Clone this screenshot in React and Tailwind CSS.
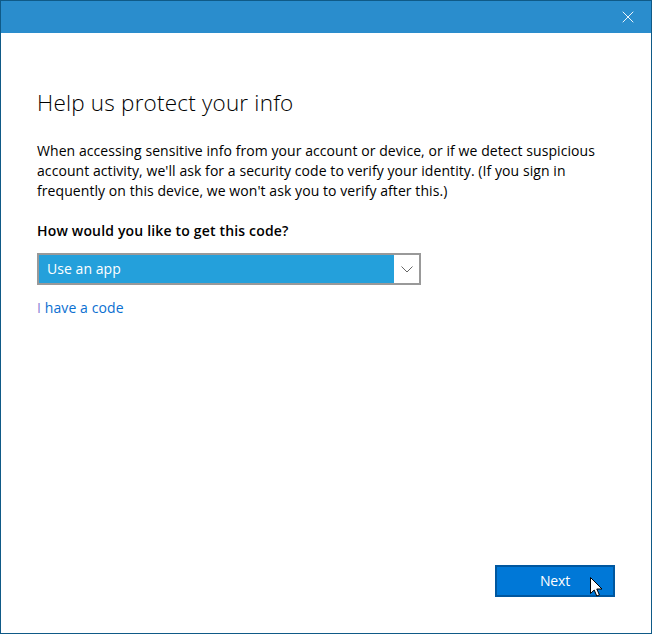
import { X } from "lucide-react";

export default function App() {
  return (
    <div className="flex h-[634px] w-[652px] flex-col border border-[#0f5a87] bg-white font-['Open_Sans','Noto_Sans',sans-serif] text-black">
      {/* Title bar */}
      <div className="flex h-[32px] shrink-0 items-center justify-end bg-[#2a8dcd] pr-[13px]">
        <X className="h-[20px] w-[20px] text-white" strokeWidth={1.1} />
      </div>

      <div className="flex flex-1 flex-col pl-[36px] pr-[36px]">
        <h1 className="mt-[52px] text-[22.5px] font-light leading-[36px] tracking-[0.2px]">Help us protect your info</h1>

        <p className="mt-[20px] text-[14px] leading-[20px] tracking-[0.07px]">
          When accessing sensitive info from your account or device, or if we detect suspicious
          <br />
          account activity, we'll ask for a security code to verify your identity. (If you sign in
          <br />
          frequently on this device, we won't ask you to verify after this.)
        </p>

        <label className="mt-[20px] text-[14px] font-semibold leading-[20px] tracking-[0.17px]">How would you like to get this code?</label>

        {/* Select */}
        <div className="mt-[12px] flex h-[32px] w-[384px] items-stretch border-2 border-[#999] bg-white">
          <div className="flex flex-1 items-center bg-[#24a0db] pb-[2px] pl-[8px] text-[14px] tracking-[0.05px] text-white">Use an app</div>
          <div className="flex w-[25px] items-center justify-center">
            <svg width="12" height="7" viewBox="0 0 12 7" fill="none" stroke="#666" strokeWidth="1">
              <path d="M0.5 0.5 L6 6 L11.5 0.5" />
            </svg>
          </div>
        </div>

        <a className="mt-[13px] text-[14px] leading-[20px] tracking-[0.1px] text-[#0a6fd1]">
          <span className="text-[#8f7fd6]">I</span> have a code
        </a>

        {/* Footer */}
        <div className="mt-auto flex justify-end pb-[36px]">
          <div className="relative">
            <button className="flex h-[32px] w-[120px] items-center justify-center border-2 border-[#00579f] bg-[#0078d7] pb-[2px] text-[14px] tracking-[-0.2px] text-white">
              Next
            </button>
            <svg className="absolute left-[95px] top-[12px]" width="13" height="20" viewBox="0 0 13 20">
              <path d="M0.5 0.5 V16.5 L4.2 13 L6.8 19 L9.4 17.9 L6.8 12 H12 Z" fill="#fff" stroke="#000" strokeWidth="1" />
            </svg>
          </div>
        </div>
      </div>
    </div>
  );
}
